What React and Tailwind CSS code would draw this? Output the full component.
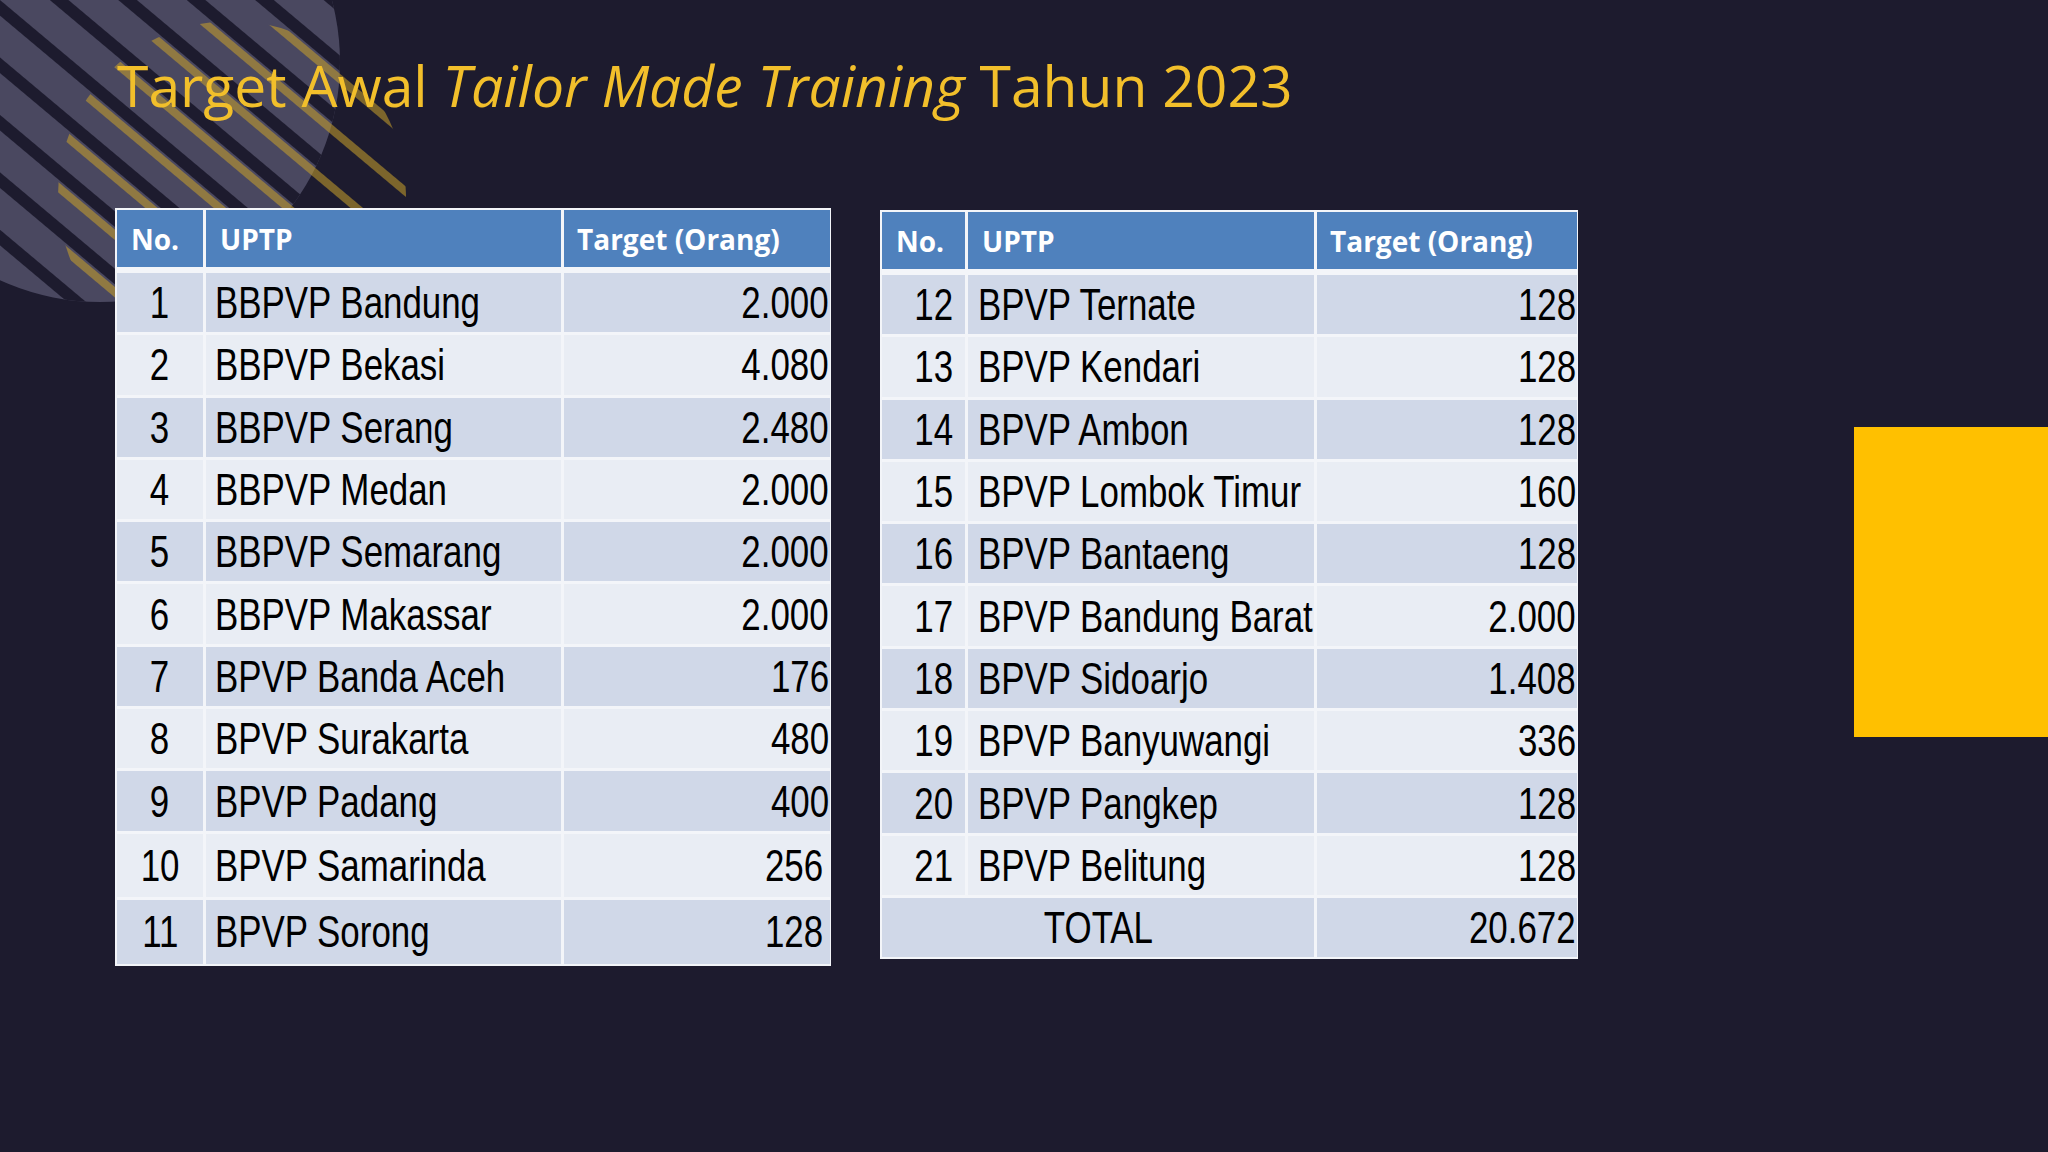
import React from "react";

const t1 = [
  ["1", "BBPVP Bandung", "2.000"],
  ["2", "BBPVP Bekasi", "4.080"],
  ["3", "BBPVP Serang", "2.480"],
  ["4", "BBPVP Medan", "2.000"],
  ["5", "BBPVP Semarang", "2.000"],
  ["6", "BBPVP Makassar", "2.000"],
  ["7", "BPVP Banda Aceh", "176"],
  ["8", "BPVP Surakarta", "480"],
  ["9", "BPVP Padang", "400"],
  ["10", "BPVP Samarinda", "256"],
  ["11", "BPVP Sorong", "128"],
];

const t2 = [
  ["12", "BPVP Ternate", "128"],
  ["13", "BPVP Kendari", "128"],
  ["14", "BPVP Ambon", "128"],
  ["15", "BPVP Lombok Timur", "160"],
  ["16", "BPVP Bantaeng", "128"],
  ["17", "BPVP Bandung Barat", "2.000"],
  ["18", "BPVP Sidoarjo", "1.408"],
  ["19", "BPVP Banyuwangi", "336"],
  ["20", "BPVP Pangkep", "128"],
  ["21", "BPVP Belitung", "128"],
];

function Decoration() {
  return (
    <svg
      className="absolute left-0 top-0 pointer-events-none"
      width="470"
      height="330"
      viewBox="0 0 470 330"
    >
      <defs>
        <clipPath id="grayClip">
          <circle cx="100" cy="62" r="240" />
        </clipPath>
        <clipPath id="yelClip">
          <circle cx="232" cy="195" r="174" />
        </clipPath>
        <pattern
          id="darkStripes"
          width="60"
          height="44"
          patternUnits="userSpaceOnUse"
          patternTransform="rotate(40)"
        >
          <rect x="0" y="0" width="60" height="12" fill="#1d1b2e" />
        </pattern>
        <pattern
          id="yelStripes"
          width="60"
          height="44"
          patternUnits="userSpaceOnUse"
          patternTransform="rotate(40) translate(0 14)"
        >
          <rect x="0" y="0" width="60" height="8" fill="#c9a12a" />
        </pattern>
      </defs>
      <g clipPath="url(#grayClip)">
        <rect x="0" y="0" width="470" height="330" fill="#4a4860" />
        <rect x="0" y="0" width="470" height="330" fill="url(#darkStripes)" />
      </g>
      <g clipPath="url(#yelClip)" opacity="0.55">
        <rect x="0" y="0" width="470" height="330" fill="url(#yelStripes)" />
      </g>
    </svg>
  );
}

const body = "font-['Liberation_Sans',Arial,sans-serif] text-[45px] leading-none text-black";
const head = "font-['Open_Sans',sans-serif] font-bold text-[28px] leading-none text-white";

function N({ children, origin }) {
  return (
    <span className={`inline-block whitespace-nowrap scale-x-[0.775] ${origin}`}>{children}</span>
  );
}

function Table({ rows, cols, total, numRight, tall, namePad }) {
  return (
    <div className="bg-[#f3f5f9] p-[2px] flex flex-col">
      <div className={`grid ${cols} gap-x-[3px] h-[57px] mb-[6px]`}>
        <div className={`bg-[#4f81bd] flex items-center pl-[14px] ${head}`}>No.</div>
        <div className={`bg-[#4f81bd] flex items-center pl-[14px] ${head}`}>UPTP</div>
        <div className={`bg-[#4f81bd] flex items-center pl-[13px] ${head}`}>Target (Orang)</div>
      </div>
      <div className="flex flex-col gap-y-[3px]">
        {rows.map((r, i) => {
          const bg = i % 2 === 0 ? "bg-[#d0d8e8]" : "bg-[#e9edf4]";
          const isTall = tall && i >= 9;
          return (
            <div
              key={r[0]}
              className={`grid ${cols} gap-x-[3px] ${isTall ? "h-[63.5px]" : "h-[59.3px]"}`}
            >
              <div
                className={`${bg} min-w-0 flex items-center ${numRight ? "justify-end pr-[12px]" : "justify-center"} ${body}`}
              >
                <N origin={numRight ? "origin-right" : "origin-center"}>{r[0]}</N>
              </div>
              <div className={`${bg} min-w-0 flex items-center ${namePad} ${body}`}>
                <N origin="origin-left">{r[1]}</N>
              </div>
              <div
                className={`${bg} min-w-0 flex items-center justify-end ${isTall ? "pr-[7px]" : "pr-[1px]"} ${body}`}
              >
                <N origin="origin-right">{r[2]}</N>
              </div>
            </div>
          );
        })}
        {total && (
          <div className={`grid ${cols} gap-x-[3px] h-[59.3px]`}>
            <div className={`col-span-2 bg-[#d0d8e8] flex items-center justify-center ${body}`}>
              <N origin="origin-center">TOTAL</N>
            </div>
            <div className={`bg-[#d0d8e8] flex items-center justify-end pr-[1px] ${body}`}>
              <N origin="origin-right">{total}</N>
            </div>
          </div>
        )}
      </div>
    </div>
  );
}

export default function App() {
  return (
    <div className="relative w-[2048px] h-[1152px] overflow-hidden bg-[#1d1b2e]">
      <Decoration />
      <div className="relative flex flex-col pt-[57px] pl-[117px]">
        <h1 className="font-['Open_Sans',sans-serif] text-[57px] leading-none text-[#f2bf2b] whitespace-nowrap">
          Target Awal <span className="italic">Tailor Made Training</span> Tahun 2023
        </h1>
        <div className="mt-[94px] -ml-[2px] flex items-start">
          <div className="w-[716px]">
            <Table rows={t1} cols="grid-cols-[86px_355px_266px]" tall namePad="pl-[9px]" />
          </div>
          <div className="ml-[49px] mt-[2px] w-[698px]">
            <Table
              rows={t2}
              cols="grid-cols-[83px_346px_260px]"
              numRight
              total="20.672"
              namePad="pl-[10px]"
            />
          </div>
          <div className="ml-auto mt-[219px] w-[194px] h-[310px] bg-[#ffc000]" />
        </div>
      </div>
    </div>
  );
}
